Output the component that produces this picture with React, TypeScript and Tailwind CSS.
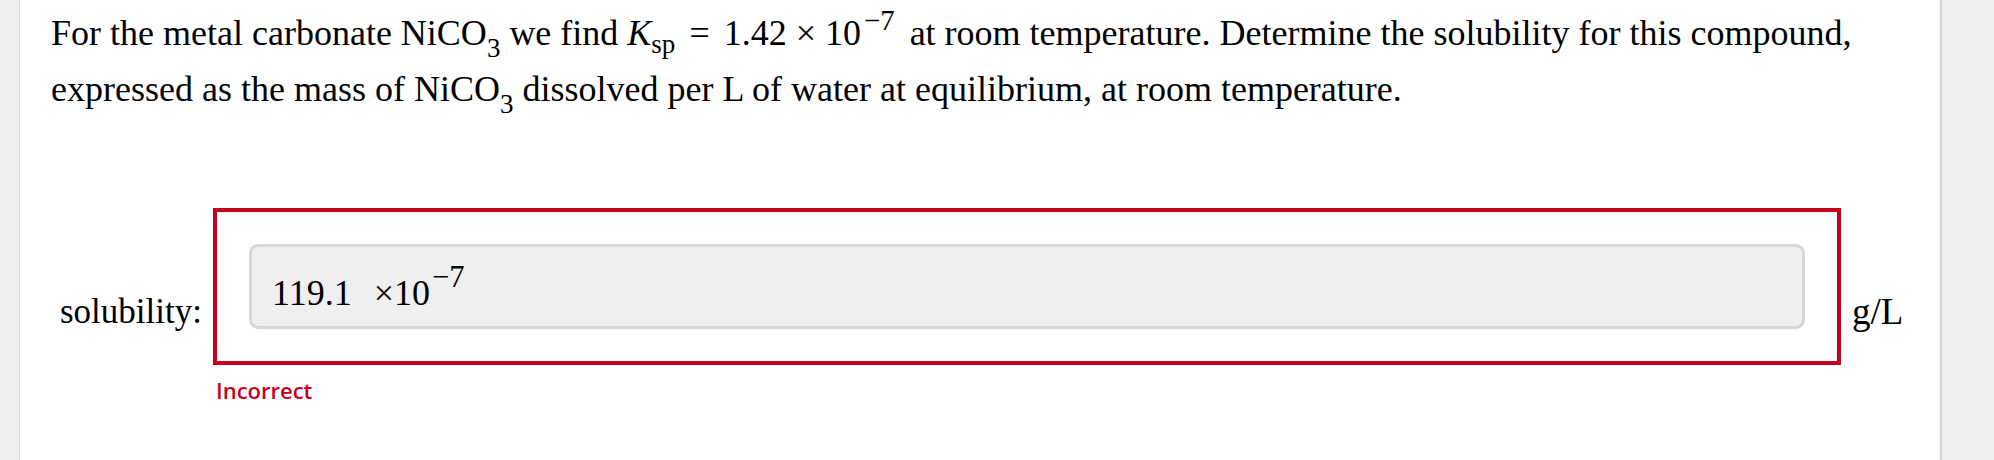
import React from 'react';

const serif = "font-['Liberation_Serif','Times_New_Roman',serif]";

function Sub({ children }: { children: React.ReactNode }) {
  return <span className="relative top-[12px] text-[0.75em] leading-none">{children}</span>;
}

function Sup({ children }: { children: React.ReactNode }) {
  return <span className="relative -top-[15px] ml-[3px] mr-[6px] text-[0.8em] leading-none">{children}</span>;
}

export default function App() {
  return (
    <div className="flex h-[460px] w-full bg-white">
      {/* left gutter */}
      <div className="w-[20px] shrink-0 border-r border-[#dadada] bg-[#efefef]" />

      {/* question body */}
      <div className={`flex-1 pl-[31px] pr-[24px] text-black ${serif}`}>
        <p className="pt-[5px] text-[36px] leading-[56px]">
          For the metal carbonate NiCO<Sub>3</Sub> we find <i>K</i>
          <span className="relative top-[8px] text-[0.75em] leading-none">sp</span>
          <span className="mx-[14px]">=</span>1.42 × 10<Sup>−7</Sup> at room temperature. Determine the
          solubility for this compound, expressed as the mass of NiCO<Sub>3</Sub> dissolved per L of water
          at equilibrium, at room temperature.
        </p>

        <div className="mt-[91px] ml-[9px] flex items-start gap-[11px] text-[35px] leading-[40px]">
          <span className="mt-[84px]">solubility:</span>

          <div>
            <div className="w-[1628px] border-4 border-[#c5001d] p-[32px]">
              <div className="h-[85px] rounded-[9px] border-[3px] border-[#d6d6d6] bg-[#efefef] pl-[20px] pt-[26px] text-[36px]">
                <span>119.1</span>
                <span className="ml-[22px]">×10</span>
                <span className="relative -top-[18px] ml-[2px] text-[0.85em] leading-none">−7</span>
              </div>
            </div>
            <div className="mt-[11px] ml-[3px] font-['Open_Sans',sans-serif] text-[22px] font-semibold leading-[28px] text-[#c5001d]">
              Incorrect
            </div>
          </div>

          <span className="mt-[84px] text-[37px]">g/L</span>
        </div>
      </div>

      {/* right gutter */}
      <div className="w-[54px] shrink-0 border-l-2 border-[#d4d4d4] bg-[#eeeeee]" />
    </div>
  );
}
